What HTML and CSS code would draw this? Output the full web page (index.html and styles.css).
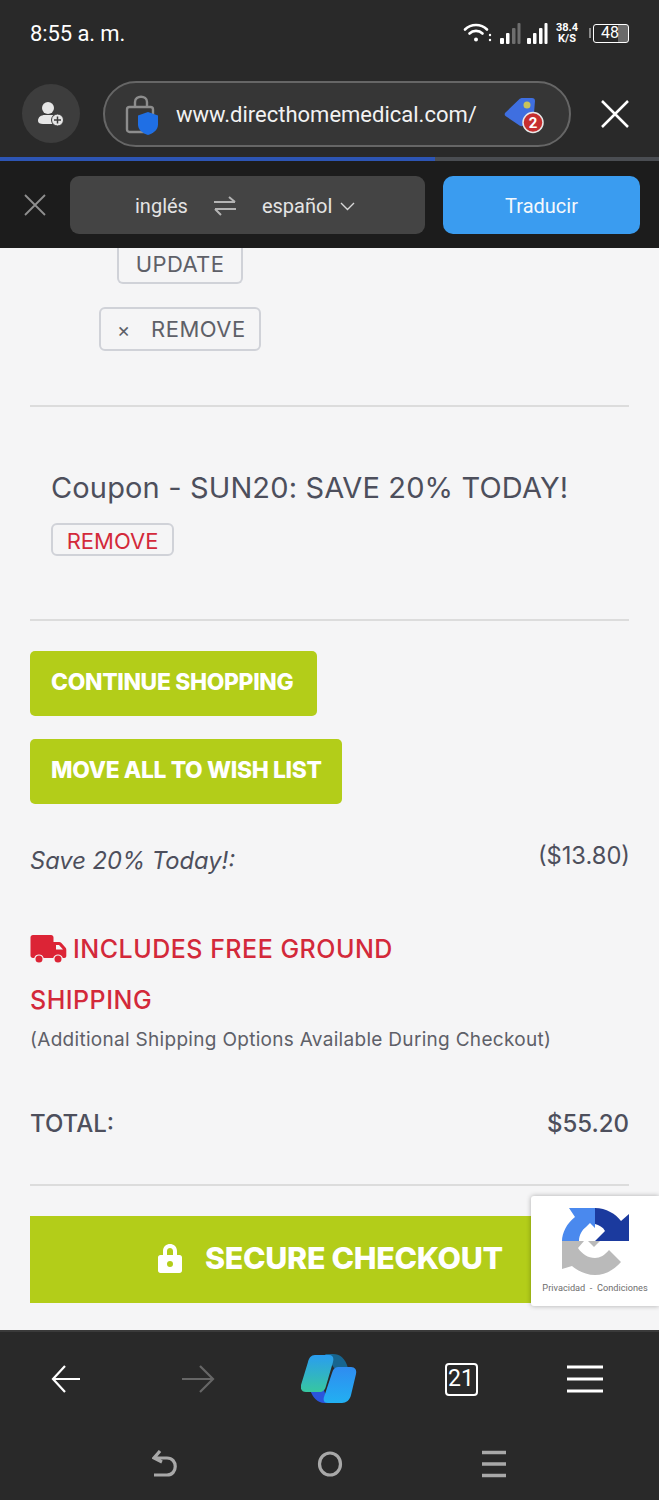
FILE: index.html
```html
<!DOCTYPE html>
<html lang="en">

<head>
    <meta charset="UTF-8" />
    <meta name="viewport" content="width=device-width, initial-scale=1.0" />
    <title>Cart</title>
    <link rel="stylesheet" href="styles.css">
</head>

<body>
    <header class="browser-top">
        <div class="status-bar">
            <span class="clock">8:55 a. m.</span>
            <div class="status-icons">
                <svg class="wifi" width="30" height="24" viewBox="0 0 30 24" fill="none" stroke="#fff" stroke-width="2.6" stroke-linecap="round">
                    <path d="M2 8.5C8 2.500 18 2.500 24 8.500" />
                    <path d="M6.500 12.500C10 9 16 9 19.500 12.500" />
                    <circle cx="13" cy="18.500" r="2" fill="#fff" stroke="none" />
                    <circle cx="27" cy="14" r="1.200" fill="#fff" stroke="none" />
                    <circle cx="27" cy="19" r="1.200" fill="#fff" stroke="none" />
                </svg>
                <svg class="signal" width="21" height="21" viewBox="0 0 21 21" fill="#fff">
                    <rect x="0" y="15" width="4" height="6" rx="1" />
                    <rect x="6" y="10" width="3.500" height="11" rx="1" />
                    <rect x="12" y="5" width="3.500" height="16" rx="1" fill="#6e6e6e" />
                    <rect x="17.500" y="0" width="3" height="21" rx="1" fill="#6e6e6e" />
                </svg>
                <svg class="signal" width="21" height="21" viewBox="0 0 21 21" fill="#fff">
                    <rect x="0" y="15" width="4" height="6" rx="1" />
                    <rect x="6" y="10" width="3.500" height="11" rx="1" />
                    <rect x="12" y="5" width="3.500" height="16" rx="1" />
                    <rect x="17.500" y="0" width="3" height="21" rx="1" />
                </svg>
                <div class="speed"><span>38.4</span><span>K/S</span></div>
                <div class="battery">
                    <i class="battery-tip"></i>
                    <div class="battery-body"><span>48</span></div>
                </div>
            </div>
        </div>

        <div class="address-row">
            <div class="profile">
                <svg width="30" height="30" viewBox="0 0 30 30">
                    <circle cx="12" cy="9" r="6" fill="#e6e6e6" />
                    <path d="M2 22c0-4 3-6 7-6h6c3 0 4 2 2 4-1 2-1 4 0 5H7c-3 0-5-1-5-3z" fill="#e6e6e6" />
                    <circle cx="21.500" cy="21" r="6" fill="#e6e6e6" stroke="#3d3d3d" stroke-width="1" />
                    <path d="M21.500 17.500v7M18 21h7" stroke="#3d3d3d" stroke-width="1.500" />
                </svg>
            </div>
            <div class="url-pill">
                <svg class="lock-shield" width="36" height="42" viewBox="0 0 36 42" fill="none">
                    <path d="M10 13V8c0-7 12-7 12 0v5" stroke="#8d8d8d" stroke-width="2.400" />
                    <rect x="2" y="13" width="26" height="25" rx="2.500" stroke="#8d8d8d" stroke-width="2.400" />
                    <path d="M23 18l10 3.500v9c0 5-4 8.500-10 10.500-6-2-10-5.500-10-10.500v-9z" fill="#1f6fe5" />
                </svg>
                <span class="url">www.directhomemedical.com/</span>
                <svg class="coupon-tag" width="42" height="38" viewBox="0 0 42 38">
                    <path d="M2 17L16 3.500c1-1 2-1.500 3.500-1.500H29c2 0 3 1 3 3l-1 12c0 1-.5 2-1.500 3L21 29c-1.500 1.500-3 1.500-4.500.5L2.500 20c-1-.8-1-2-.5-3z" fill="#3f6fe0" />
                    <circle cx="24" cy="9" r="3.500" fill="#c8c35a" />
                    <circle cx="30" cy="26.500" r="10" fill="#c62f2f" stroke="#e8e8e8" stroke-width="1.500" />
                    <text x="30" y="32" text-anchor="middle" class="tag-count">2</text>
                </svg>
            </div>
            <svg class="close-tab" width="30" height="30" viewBox="0 0 30 30" stroke="#fff" stroke-width="2.500">
                <path d="M2 2l26 26M28 2L2 28" />
            </svg>
        </div>

        <div class="progress"><div class="progress-fill"></div></div>

        <div class="translate-bar">
            <svg class="close-translate" width="24" height="24" viewBox="0 0 24 24" stroke="#8f8f8f" stroke-width="1.800">
                <path d="M2 2l20 20M22 2L2 22" />
            </svg>
            <div class="lang-box">
                <span>inglés</span>
                <svg width="24" height="20" viewBox="0 0 24 20" fill="none" stroke="#b4b4b4" stroke-width="2">
                    <path d="M1 6h21M16 1l6 5M23 13H2M8 19l-6-6" />
                </svg>
                <span class="lang-to">español
                    <svg width="15" height="9" viewBox="0 0 15 9" fill="none" stroke="#d8d8d8" stroke-width="1.400">
                        <path d="M1 1l6.500 6.500L14 1" />
                    </svg>
                </span>
            </div>
            <button class="translate-btn">Traducir</button>
        </div>
    </header>

    <main class="page">
        <div class="item-actions">
            <a class="outline-btn update-btn">UPDATE</a>
            <a class="outline-btn remove-btn"><span class="times">&times;</span>REMOVE</a>
        </div>

        <div class="coupon">
            <p class="coupon-title">Coupon - SUN20: SAVE 20% TODAY!</p>
            <a class="outline-btn coupon-remove">REMOVE</a>
        </div>

        <div class="cart-buttons">
            <a class="green-btn continue-btn">CONTINUE SHOPPING</a>
            <a class="green-btn wish-btn">MOVE ALL TO WISH LIST</a>
        </div>

        <div class="discount-row">
            <em>Save 20% Today!:</em>
            <span>($13.80)</span>
        </div>

        <div class="shipping">
            <p class="shipping-line">
                <svg width="37" height="30" viewBox="0 0 37 30" fill="#dc2436">
                    <path d="M3 1h18c1.500 0 2.500 1 2.500 2.500V8h5.500c1 0 1.800.4 2.400 1l4 4.500c.6.700.9 1.500.9 2.300V22c0 1-.8 2-2 2h-1.500a5 5 0 0 0-9.600 0H13.700a5 5 0 0 0-9.500 0H3c-1.500 0-2.500-1-2.500-2.500v-18C.5 2 1.500 1 3 1zM26 11v4.500h7l-4-4.500z" />
                    <circle cx="9" cy="25" r="3.500" />
                    <circle cx="28" cy="25" r="3.500" />
                </svg>
                INCLUDES FREE GROUND
            </p>
            <p class="shipping-line">SHIPPING</p>
            <p class="shipping-note">(Additional Shipping Options Available During Checkout)</p>
        </div>

        <div class="total-row">
            <span>TOTAL:</span>
            <span>$55.20</span>
        </div>

        <a class="checkout-btn">
            <svg width="26" height="30" viewBox="0 0 26 30">
                <path fill-rule="evenodd" fill="#fff" d="M6 12V8c0-9.500 14-9.500 14 0v4h2.500c1.500 0 2.500 1 2.500 2.500v13c0 1.500-1 2.500-2.500 2.500h-19C2 30 1 29 1 27.500v-13C1 13 2 12 3.500 12zm4 0h6V8c0-4-6-4-6 0zm3 6a3 3 0 1 0 0 6 3 3 0 0 0 0-6z" />
            </svg>
            SECURE CHECKOUT
        </a>

        <!-- recaptcha badge sits over the checkout button -->
        <div class="recaptcha">
            <svg width="67" height="67" viewBox="0 0 67 67">
                <path d="M0 33C0 25 5 15 13 9L7 0H33V20L28 15L24 19C20 22 17 27 17 33Z" fill="#4a89ee" />
                <path d="M33 0C44 0 54 6 59 13L67 6V33H33L43 23C41 19 37 17 33 16Z" fill="#1b3a9e" />
                <path d="M0 33H22L16 40C20 46 26 50 33 50C38 50 43 47 47 42L59 54C52 62 43 67 33 67C24 67 16 63 10 58L0 61Z" fill="#bababa" />
                <path d="M26 33H38L32 39Z" fill="#bababa" />
            </svg>
            <div class="recaptcha-links">Privacidad &nbsp;-&nbsp; Condiciones</div>
        </div>
    </main>

    <footer class="browser-bottom">
        <nav class="toolbar">
            <svg width="30" height="30" viewBox="0 0 30 30" fill="none" stroke="#fff" stroke-width="2.200">
                <path d="M29 15H3M14 2L2 15l12 13" />
            </svg>
            <svg width="34" height="30" viewBox="0 0 34 30" fill="none" stroke="#666" stroke-width="2.200">
                <path d="M1 15h30M19 2l13 13-13 13" />
            </svg>
            <svg width="56" height="50" viewBox="0 0 56 50">
                <defs>
                    <linearGradient id="copilotLeft" x1="0" y1="0" x2="0" y2="1">
                        <stop offset="0" stop-color="#2a9df0" />
                        <stop offset="1" stop-color="#37c7a0" />
                    </linearGradient>
                    <linearGradient id="copilotRight" x1="0" y1="0" x2="0" y2="1">
                        <stop offset="0" stop-color="#2f8cf0" />
                        <stop offset="1" stop-color="#22b0f2" />
                    </linearGradient>
                </defs>
                <path d="M24 0h8c7 0 12 4 15 14H33z" fill="#17658f" />
                <path d="M9 36h14l4 13h-4c-6 0-11-5-14-13z" fill="#2a55dc" />
                <path d="M14 1h14c4 0 5 3 4 7l-7 24c-1 4-3 6-7 6H5c-4 0-6-3-5-7L7 8c1-4 3-7 7-7z" fill="url(#copilotLeft)" />
                <path d="M37 13h13c4 0 6 3 5 7l-5 21c-1 5-5 8-9 8H27c-4 0-5-3-4-6l8-24c1-4 3-6 6-6z" fill="url(#copilotRight)" />
            </svg>
            <div class="tab-count">21</div>
            <svg width="38" height="28" viewBox="0 0 38 28" stroke="#fff" stroke-width="3">
                <path d="M1 2h36M1 14h36M1 26h36" />
            </svg>
        </nav>
        <nav class="android-nav">
            <svg width="26" height="28" viewBox="0 0 26 28" fill="none" stroke="#a8a8a8" stroke-width="3.200">
                <path d="M3 8h12c11 0 11 17 0 17H2M8 1L2 8l8 4" />
            </svg>
            <svg width="26" height="28" viewBox="0 0 26 28" fill="none" stroke="#a8a8a8" stroke-width="3.200">
                <ellipse cx="13" cy="14" rx="10.500" ry="11" />
            </svg>
            <svg width="26" height="28" viewBox="0 0 26 28" stroke="#a8a8a8" stroke-width="3.400">
                <path d="M1 2.500h24M1 14h24M1 25.500h24" />
            </svg>
        </nav>
    </footer>
</body>

</html>
```

FILE: styles.css
```css
* {
    box-sizing: border-box;
    margin: 0;
    padding: 0;
}

body {
    width: 659px;
    height: 1500px;
    overflow: hidden;
    display: flex;
    flex-direction: column;
    font-family: 'Roboto', sans-serif;
    background: #292929;
}

/* browser chrome, top */
.browser-top {
    height: 248px;
    background: #292929;
}

.status-bar {
    height: 67px;
    padding: 20px 30px 0 30px;
    display: flex;
    justify-content: space-between;
    align-items: flex-start;
    color: #fff;
}

.clock {
    font-size: 22px;
    line-height: 28px;
    letter-spacing: -0.1px;
}

.status-icons {
    display: flex;
    align-items: center;
    gap: 6px;
    margin-top: 1px;
}

.wifi {
    margin-right: 1px;
}

.speed {
    display: flex;
    flex-direction: column;
    align-items: center;
    margin-left: 1px;
    font-size: 11px;
    font-weight: 700;
    line-height: 11px;
    width: 24px;
}

.battery {
    display: flex;
    align-items: center;
    margin-left: 4px;
}

.battery-tip {
    width: 2px;
    height: 10px;
    background: #8a8a8a;
    margin-right: 2px;
}

.battery-body {
    width: 36px;
    height: 19px;
    border: 1.500px solid #fff;
    border-radius: 3px;
    background: linear-gradient(90deg, #292929 70%, #6a6a6a 70%);
    font-size: 16px;
    line-height: 16px;
    padding-left: 7px;
}

.address-row {
    height: 90px;
    padding: 14px 29px 10px 22px;
    display: flex;
    align-items: flex-start;
}

.profile {
    width: 58px;
    height: 59px;
    margin-top: 3px;
    border-radius: 50%;
    background: #3d3d3d;
    display: flex;
    align-items: center;
    justify-content: center;
}

.url-pill {
    width: 468px;
    height: 66px;
    margin-left: 23px;
    padding: 0 22px 0 20px;
    border: 2px solid #666;
    border-radius: 33px;
    background: #363636;
    display: flex;
    align-items: center;
}

.lock-shield {
    margin-top: 2px;
}

.url {
    width: 302px;
    margin-left: 15px;
    color: #f2f2f2;
    font-size: 22px;
    white-space: nowrap;
}

.coupon-tag {
    margin-left: 25px;
    margin-top: 2px;
}

.tag-count {
    fill: #fff;
    font-size: 15px;
    font-weight: 700;
}

.close-tab {
    margin-left: 29px;
    margin-top: 18px;
}

.progress {
    height: 4px;
    background: #4a4d52;
}

.progress-fill {
    width: 435px;
    height: 4px;
    background: #2d55b4;
}

.translate-bar {
    height: 87px;
    background: #1c1c1c;
    padding: 15px 19px 0 23px;
    display: flex;
    align-items: flex-start;
}

.close-translate {
    margin-top: 17px;
}

.lang-box {
    width: 355px;
    height: 58px;
    margin-left: 23px;
    padding: 2px 0 0 65px;
    border-radius: 9px;
    background: #444;
    color: #e4e4e4;
    font-size: 20px;
    display: flex;
    align-items: center;
    gap: 25px;
}

.lang-to {
    display: flex;
    align-items: center;
    gap: 8px;
}

.translate-btn {
    width: 197px;
    height: 58px;
    margin-left: 18px;
    padding-top: 2px;
    border: none;
    border-radius: 10px;
    background: #3a9cf0;
    color: #f4f8fc;
    font-family: 'Roboto', sans-serif;
    font-size: 20px;
}

/* shop page */
.page {
    position: relative;
    height: 1082px;
    overflow: hidden;
    padding: 0 30px;
    background: #f5f5f6;
    color: #4d4f5c;
    font-family: 'Inter', sans-serif;
}

.outline-btn {
    display: block;
    border: 2px solid #d0d2d8;
    border-radius: 6px;
    color: #5e6068;
    white-space: nowrap;
}

.item-actions {
    height: 159px;
    border-bottom: 2px solid #dcdcdc;
    display: flex;
    flex-direction: column;
    align-items: flex-start;
}

.update-btn {
    width: 126px;
    height: 36px;
    margin-left: 87px;
    border-top: none;
    border-radius: 0 0 6px 6px;
    text-align: center;
    font-size: 22px;
    line-height: 32px;
    letter-spacing: 0.4px;
}

.remove-btn {
    width: 162px;
    height: 44px;
    margin-left: 69px;
    margin-top: 23px;
    padding-left: 16px;
    font-size: 22px;
    line-height: 40px;
    letter-spacing: 0.5px;
}

.times {
    display: inline-block;
    width: 34px;
    font-size: 20px;
}

.coupon {
    height: 214px;
    padding: 63px 0 0 21px;
    border-bottom: 2px solid #dcdcdc;
}

.coupon-title {
    font-size: 29px;
    line-height: 36px;
    letter-spacing: 0.14px;
    white-space: nowrap;
}

.coupon-remove {
    width: 123px;
    height: 33px;
    margin-top: 17px;
    text-align: center;
    color: #d3293a;
    font-size: 22px;
    line-height: 32px;
}

.cart-buttons {
    margin-top: 30px;
    display: flex;
    flex-direction: column;
    align-items: flex-start;
    gap: 23px;
}

.green-btn {
    height: 65px;
    padding-left: 21px;
    border-radius: 5px;
    background: #b3cd19;
    color: #fff;
    font-size: 22.800px;
    font-weight: 800;
    line-height: 62px;
    letter-spacing: -0.3px;
    white-space: nowrap;
}

.continue-btn {
    width: 287px;
}

.wish-btn {
    width: 312px;
    letter-spacing: -0.35px;
}

.discount-row {
    margin-top: 39px;
    display: flex;
    justify-content: space-between;
    font-size: 23.700px;
    line-height: 36px;
}

.discount-row span {
    margin-top: -5px;
    margin-right: -1px;
}

.shipping {
    margin-top: 44px;
    color: #d3293a;
}

.shipping-line {
    display: flex;
    align-items: center;
    gap: 6px;
    height: 51px;
    font-size: 25px;
    font-weight: 500;
    letter-spacing: 0.5px;
}

.shipping-note {
    margin-top: 1px;
    color: #5e6068;
    font-size: 19px;
    line-height: 28px;
    letter-spacing: 0.3px;
    white-space: nowrap;
}

.total-row {
    height: 81px;
    margin-top: 51px;
    padding-top: 2px;
    border-bottom: 2px solid #dcdcdc;
    display: flex;
    justify-content: space-between;
    font-size: 24px;
    font-weight: 500;
    line-height: 34px;
}

.checkout-btn {
    height: 87px;
    margin-top: 30px;
    padding: 0 0 3px 127px;
    background: #b3cd19;
    color: #fff;
    font-size: 30.400px;
    font-weight: 800;
    letter-spacing: -0.3px;
    display: flex;
    align-items: center;
    gap: 22px;
    white-space: nowrap;
}

.recaptcha {
    position: absolute;
    right: 0;
    top: 948px;
    width: 128px;
    height: 110px;
    padding-top: 12px;
    background: #fff;
    border-radius: 3px 0 0 3px;
    box-shadow: 0 0 5px rgba(0, 0, 0, 0.3);
    display: flex;
    flex-direction: column;
    align-items: center;
    font-family: 'Roboto', sans-serif;
}

.recaptcha-links {
    margin-top: 7px;
    color: #6e6e6e;
    font-size: 9.200px;
    white-space: nowrap;
}

/* browser chrome, bottom */
.browser-bottom {
    height: 170px;
    background: #292929;
    border-top: 2px solid #3a3a3a;
}

.toolbar {
    height: 94px;
    padding-right: 16px;
    display: grid;
    grid-template-columns: 132px 131px 132px 132px 116px;
    justify-items: center;
    align-items: center;
}

.tab-count {
    width: 33px;
    height: 33px;
    border: 2.500px solid #fff;
    border-radius: 4px;
    color: #fff;
    font-size: 23px;
    line-height: 28px;
    text-align: center;
}

.android-nav {
    height: 74px;
    padding: 14px 152px 12px 152px;
    display: flex;
    justify-content: space-between;
    align-items: center;
}
```
